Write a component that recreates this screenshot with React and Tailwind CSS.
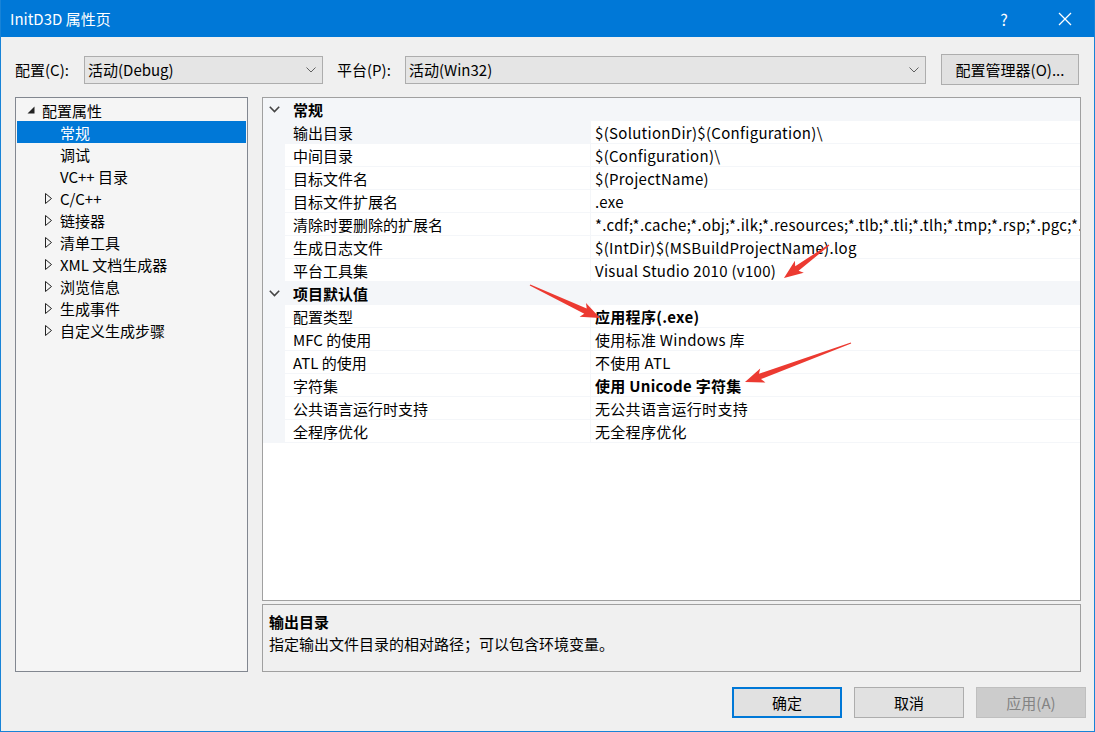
import React from "react";

function arrowPts(x1, y1, x2, y2) {
  const dx = x2 - x1, dy = y2 - y1;
  const L = Math.hypot(dx, dy);
  const ux = dx / L, uy = dy / L;
  const nx = -uy, ny = ux;
  const H = 19;
  const p = (d, w) => `${(x1 + ux * d + nx * w).toFixed(1)},${(y1 + uy * d + ny * w).toFixed(1)}`;
  return [p(0, 0.6), p(L - H + 3, 2.8), p(L - H, 7.5), p(L, 0), p(L - H, -7.5), p(L - H + 3, -2.8), p(0, -0.6)].join(" ");
}

const Chevron = () => (
  <svg width="10" height="6" viewBox="0 0 10 6" className="shrink-0">
    <polyline points="0.5,0.5 5,5 9.5,0.5" fill="none" stroke="#606060" strokeWidth="1" />
  </svg>
);

const SectionChevron = () => (
  <svg width="11" height="7" viewBox="0 0 11 7">
    <polyline points="0.8,0.8 5.5,5.5 10.2,0.8" fill="none" stroke="#444" strokeWidth="1.6" />
  </svg>
);

const Collapsed = () => (
  <svg width="7" height="11" viewBox="0 0 7 11">
    <polygon points="0.5,0.5 6.5,5.5 0.5,10.5" fill="none" stroke="#222" strokeWidth="1" />
  </svg>
);

const Expanded = () => (
  <svg width="8" height="8" viewBox="0 0 8 8">
    <polygon points="7.5,0.5 7.5,7.5 0.5,7.5" fill="#222" />
  </svg>
);

const general = [
  ["输出目录", "$(SolutionDir)$(Configuration)\\"],
  ["中间目录", "$(Configuration)\\"],
  ["目标文件名", "$(ProjectName)"],
  ["目标文件扩展名", ".exe"],
  ["清除时要删除的扩展名", "*.cdf;*.cache;*.obj;*.ilk;*.resources;*.tlb;*.tli;*.tlh;*.tmp;*.rsp;*.pgc;*.pgd;*.meta;$(TargetPath)"],
  ["生成日志文件", "$(IntDir)$(MSBuildProjectName).log"],
  ["平台工具集", "Visual Studio 2010 (v100)"],
];

const defaults = [
  ["配置类型", "应用程序(.exe)", true],
  ["MFC 的使用", "使用标准 Windows 库"],
  ["ATL 的使用", "不使用 ATL"],
  ["字符集", "使用 Unicode 字符集", true],
  ["公共语言运行时支持", "无公共语言运行时支持"],
  ["全程序优化", "无全程序优化"],
];

function Header({ label }) {
  return (
    <div className="flex h-[23px] items-center bg-[#f4f6f9] border-b border-[#f4f6f9]">
      <div className="w-[22px] flex justify-center pt-[1px]">
        <SectionChevron />
      </div>
      <div className="pl-[8px] font-bold">{label}</div>
    </div>
  );
}

function Row({ name, value, bold, selected }) {
  return (
    <div className="flex h-[23px] bg-[#f4f6f9]">
      <div className="w-[22px] shrink-0" />
      <div className={`w-[306px] shrink-0 flex items-center pl-[8px] border-b border-r border-[#f4f6f9] ${selected ? "bg-[#f4f6f9]" : "bg-white"}`}>
        {name}
      </div>
      <div className={`flex-1 min-w-0 flex items-center pl-[4px] bg-white border-b border-[#f4f6f9] overflow-hidden whitespace-nowrap tracking-[0.3px] ${bold ? "font-bold" : ""}`}>
        {value}
      </div>
    </div>
  );
}

function TreeItem({ label, level, icon, selected }) {
  return (
    <div className={`flex h-[22px] items-center ${selected ? "bg-[#0078d7] text-white" : ""}`}>
      {level === 0 ? (
        <>
          <div className="w-[10px]" />
          <Expanded />
          <div className="w-[7px]" />
          <span>{label}</span>
        </>
      ) : icon ? (
        <>
          <div className="w-[28px]" />
          <Collapsed />
          <div className="w-[8px]" />
          <span>{label}</span>
        </>
      ) : (
        <>
          <div className="w-[43px]" />
          <span>{label}</span>
        </>
      )}
    </div>
  );
}

export default function App() {
  return (
    <div className="relative w-[1095px] h-[732px] bg-[#f0f0f0] border-l border-r border-b border-[#1883d7] font-['Noto_Sans_CJK_SC',sans-serif] text-[15px] text-[#000] overflow-hidden leading-none">
      {/* Title bar */}
      <div className="h-[37px] bg-[#0078d7] flex items-center text-white -mx-[1px]">
        <div className="pl-[10px] flex-1 text-[15px]">InitD3D 属性页</div>
        <div className="w-[20px] text-center text-[16px] mr-[44px]">?</div>
        <svg width="14" height="14" viewBox="0 0 14 14" className="mr-[23px]">
          <line x1="1" y1="1" x2="13" y2="13" stroke="white" strokeWidth="1.2" />
          <line x1="13" y1="1" x2="1" y2="13" stroke="white" strokeWidth="1.2" />
        </svg>
      </div>

      {/* Config row */}
      <div className="flex items-center h-[31px] mt-[17px] pl-[14px]">
        <div className="w-[69px]">配置(C):</div>
        <div className="w-[239px] h-[28px] bg-[#e5e5e5] border border-[#adadad] flex items-center pl-[3px] pr-[6px] justify-between">
          <span>活动(Debug)</span>
          <Chevron />
        </div>
        <div className="w-[68px] ml-[14px]">平台(P):</div>
        <div className="w-[521px] h-[28px] bg-[#e5e5e5] border border-[#adadad] flex items-center pl-[3px] pr-[6px] justify-between">
          <span>活动(Win32)</span>
          <Chevron />
        </div>
        <div className="w-[138px] h-[31px] ml-[15px] bg-[#e1e1e1] border border-[#adadad] flex items-center justify-center">
          配置管理器(O)...
        </div>
      </div>

      {/* Body */}
      <div className="flex mt-[12px] pl-[14px]">
        <div className="w-[233px] h-[575px] bg-[#f5f5f5] border border-[#828790] pt-[1px] px-[1px]">
          <TreeItem label="配置属性" level={0} />
          <TreeItem label="常规" level={1} selected />
          <TreeItem label="调试" level={1} />
          <TreeItem label="VC++ 目录" level={1} />
          <TreeItem label="C/C++" level={1} icon />
          <TreeItem label="链接器" level={1} icon />
          <TreeItem label="清单工具" level={1} icon />
          <TreeItem label="XML 文档生成器" level={1} icon />
          <TreeItem label="浏览信息" level={1} icon />
          <TreeItem label="生成事件" level={1} icon />
          <TreeItem label="自定义生成步骤" level={1} icon />
        </div>
        <div className="ml-[14px] w-[819px] flex flex-col">
          <div className="h-[504px] bg-white border border-[#a0a0a0] overflow-hidden">
            <Header label="常规" />
            {general.map(([n, v], i) => (
              <Row key={n} name={n} value={v} selected={i === 0} />
            ))}
            <Header label="项目默认值" />
            {defaults.map(([n, v, b]) => (
              <Row key={n} name={n} value={v} bold={b} />
            ))}
          </div>
          <div className="mt-[3px] h-[68px] bg-[#f0f0f0] border border-[#a0a0a0] pl-[6px] pt-[5px]">
            <div className="font-bold h-[22px] flex items-center">输出目录</div>
            <div className="h-[22px] flex items-center">指定输出文件目录的相对路径；可以包含环境变量。</div>
          </div>
        </div>
      </div>

      {/* Buttons */}
      <div className="flex justify-end gap-[12px] mt-[15px] pr-[8px]">
        <div className="w-[110px] h-[31px] bg-[#e1e1e1] border-2 border-[#0078d7] flex items-center justify-center">确定</div>
        <div className="w-[110px] h-[31px] bg-[#e1e1e1] border border-[#adadad] flex items-center justify-center">取消</div>
        <div className="w-[110px] h-[31px] bg-[#cccccc] border border-[#bfbfbf] text-[#838383] flex items-center justify-center">应用(A)</div>
      </div>

      {/* Annotation arrows */}
      <svg className="absolute left-0 top-0 pointer-events-none" width="1095" height="732" viewBox="-1 0 1095 732">
        <polygon points={arrowPts(827, 245, 782, 278)} fill="#ec3a31" />
        <polygon points={arrowPts(528, 285, 598, 318)} fill="#ec3a31" />
        <polygon points={arrowPts(849, 343, 743, 382)} fill="#ec3a31" />
      </svg>
    </div>
  );
}
